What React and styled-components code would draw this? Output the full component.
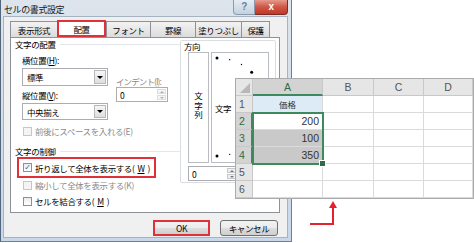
import React from "react";
import styled, { createGlobalStyle } from "styled-components";

const JP = `"Noto Sans CJK JP", "Noto Sans", sans-serif`;
const RED = "#e0303a";

const GlobalStyle = createGlobalStyle`
  html, body {
    margin: 0;
    padding: 0;
    background: #fff;
  }
  body {
    width: 474px;
    height: 243px;
    overflow: hidden;
    font-family: ${JP};
  }
`;

const tabs = [
  { label: "表示形式", width: 48 },
  { label: "配置", width: 49, marked: true },
  { label: "フォント", width: 45 },
  { label: "罫線", width: 46 },
  { label: "塗りつぶし", width: 47 },
  { label: "保護", width: 29 },
];

const cols = ["A", "B", "C", "D"];
const rows = [
  [{ v: "価格", tone: "blue", align: "center", jp: true }],
  [{ v: "200", tone: "white", align: "right" }],
  [{ v: "100", tone: "gray", align: "right" }],
  [{ v: "350", tone: "gray", align: "right" }],
  [],
  [],
];

const App = () => {
  return (
    <Page>
      <GlobalStyle />
      <Dialog>
        <TitleBar>
          <Title>セルの書式設定</Title>
          <WinButtons>
            <HelpButton>?</HelpButton>
            <CloseButton>x</CloseButton>
          </WinButtons>
        </TitleBar>
        <Body>
          <TabRow>
            {tabs.map((t) => (
              <Tab key={t.label} $w={t.width} $marked={t.marked}>
                {t.label}
              </Tab>
            ))}
          </TabRow>
          <Panel>
            <LeftCol>
              <GroupTitle>文字の配置</GroupTitle>
              <FieldRow>
                <FieldCol>
                  <Label>
                    横位置(<u>H</u>):
                  </Label>
                  <Select $h={18}>
                    <span>標準</span>
                    <DropButton />
                  </Select>
                  <Label $mt={3}>
                    縦位置(<u>V</u>):
                  </Label>
                  <Select $h={17}>
                    <span>中央揃え</span>
                    <DropButton />
                  </Select>
                </FieldCol>
                <IndentCol>
                  <Label $muted $tight>インデント(I):</Label>
                  <Spin $w={52}>
                    <span>0</span>
                    <SpinButtons $muted>
                      <SpinUp />
                      <SpinDown />
                    </SpinButtons>
                  </Spin>
                </IndentCol>
              </FieldRow>
              <CheckRow $mt={5} $muted>
                <CheckBox $muted />
                前後にスペースを入れる(E)
              </CheckRow>
              <GroupTitle $mt={8}>文字の制御</GroupTitle>
              <CheckRow $marked>
                <CheckBox $checked>✓</CheckBox>
                折り返して全体を表示する(<u>W</u>)
              </CheckRow>
              <CheckRow $mt={1} $muted>
                <CheckBox $muted />
                縮小して全体を表示する(K)
              </CheckRow>
              <CheckRow $mt={4}>
                <CheckBox />
                セルを結合する(<u>M</u>)
              </CheckRow>
            </LeftCol>
            <OrientGroup>
              <GroupLabel>方向</GroupLabel>
              <OrientRow>
                <VerticalBox>
                  <VerticalText>文字列</VerticalText>
                </VerticalBox>
                <Dial>
                  <DialDots width="58" height="111" viewBox="0 0 58 111">
                    {Array.from({ length: 13 }).map((_, i) => {
                      const a = ((90 - i * 15) * Math.PI) / 180;
                      const big = i % 3 === 0;
                      return (
                        <circle
                          key={i}
                          cx={6 + 49 * Math.cos(a)}
                          cy={55 - 49 * Math.sin(a)}
                          r={big ? 1.5 : 0.7}
                          fill="#000"
                        />
                      );
                    })}
                  </DialDots>
                  <DialText>文字</DialText>
                </Dial>
              </OrientRow>
              <Spin $w={50} $mt={3} $ml={4}>
                <span>0</span>
                <SpinButtons>
                  <SpinUp />
                  <SpinDown />
                </SpinButtons>
              </Spin>
            </OrientGroup>
          </Panel>
          <Footer>
            <Button $marked>OK</Button>
            <Button>キャンセル</Button>
          </Footer>
        </Body>
      </Dialog>

      <Sheet>
        <Corner />
        {cols.map((c) => (
          <ColHead key={c} $active={c === "A"}>
            {c}
          </ColHead>
        ))}
        {rows.map((r, ri) => (
          <React.Fragment key={ri}>
            <RowHead $active={ri >= 1 && ri <= 3}>{ri + 1}</RowHead>
            {cols.map((c, ci) => {
              const cell = r[ci];
              return (
                <Cell
                  key={c}
                  $tone={cell?.tone}
                  $align={cell?.align}
                  $jp={cell?.jp}
                >
                  {cell?.v}
                </Cell>
              );
            })}
          </React.Fragment>
        ))}
        <Selection>
          <FillHandle />
        </Selection>
      </Sheet>

      <Arrow width="34" height="30" viewBox="0 0 34 30">
        <polyline
          points="4,26 27,26 27,8"
          fill="none"
          stroke="#e4222e"
          strokeWidth="2"
        />
        <polygon points="27,3 23,10 31,10" fill="#e4222e" />
      </Arrow>
    </Page>
  );
};

const Page = styled.div`
  position: relative;
  width: 474px;
  height: 243px;
  overflow: hidden;
  background: #fff;
`;

const Dialog = styled.div`
  width: 292px;
  height: 242px;
  box-sizing: border-box;
  display: flex;
  flex-direction: column;
  background: linear-gradient(180deg, #dde4ec 0%, #c8d8ea 100%);
  border: 1px solid #6d8096;
  border-top: none;
  border-left-color: #53667b;
  font-family: ${JP};
  font-size: 8.5px;
  letter-spacing: -0.4px;
  color: #000;
`;

const TitleBar = styled.div`
  height: 16px;
  display: flex;
  justify-content: space-between;
  align-items: flex-start;
`;

const Title = styled.div`
  line-height: 19px;
  padding-left: 3px;
  font-size: 9px;
  color: #1a1a1a;
`;

const WinButtons = styled.div`
  display: flex;
  margin-right: 3px;
`;

const HelpButton = styled.div`
  width: 22px;
  height: 15px;
  box-sizing: border-box;
  border: 1px solid #8c9bab;
  border-top: none;
  border-radius: 0 0 0 4px;
  background: linear-gradient(180deg, #e6edf4, #c3d1df);
  color: #6b7f95;
  font-family: "Liberation Sans", sans-serif;
  font-size: 10px;
  font-weight: bold;
  text-align: center;
  line-height: 14px;
`;

const CloseButton = styled.div`
  width: 33px;
  height: 15px;
  box-sizing: border-box;
  border: 1px solid #7d2a22;
  border-top: none;
  border-left: none;
  border-radius: 0 0 4px 0;
  background: linear-gradient(180deg, #e59a8c 0%, #cf5645 50%, #c0392b 100%);
  color: #fff;
  font-family: "Liberation Sans", sans-serif;
  font-size: 10px;
  font-weight: bold;
  text-align: center;
  line-height: 13px;
`;

const Body = styled.div`
  flex: 1;
  margin: 0 3px 3px 2px;
  padding: 3px 7px 1px 6px;
  border: 1px solid #a6b3c2;
  background: #f0f0f0;
  display: flex;
  flex-direction: column;
`;

const TabRow = styled.div`
  height: 17px;
  display: flex;
  align-items: flex-end;
`;

const Tab = styled.div`
  width: ${(p) => p.$w}px;
  height: ${(p) => (p.$marked ? 17 : 16)}px;
  box-sizing: border-box;
  display: flex;
  align-items: center;
  justify-content: center;
  border: ${(p) => (p.$marked ? `2px solid ${RED}` : "1px solid #8e9199")};
  border-bottom: ${(p) => (p.$marked ? `2px solid ${RED}` : "none")};
  margin-right: ${(p) => (p.$marked ? 0 : -1)}px;
  background: ${(p) =>
    p.$marked ? "#fff" : "linear-gradient(180deg, #f3f3f3, #dcdcdc)"};
  white-space: nowrap;
  &:last-child {
    margin-right: 0;
  }
`;

const Panel = styled.div`
  height: 176px;
  box-sizing: border-box;
  border: 1px solid #8d9198;
  background: #fff;
  display: flex;
`;

const LeftCol = styled.div`
  width: 169px;
  padding-left: 4px;
  box-sizing: border-box;
  display: flex;
  flex-direction: column;
`;

const GroupTitle = styled.div`
  height: 12px;
  line-height: 12px;
  margin-top: ${(p) => p.$mt || 0}px;
  display: flex;
  align-items: center;
  white-space: nowrap;
  &::after {
    content: "";
    flex: 1;
    height: 1px;
    margin-left: 4px;
    background: #e3e6ea;
  }
`;

const FieldRow = styled.div`
  display: flex;
  margin-top: 4px;
  padding-left: 7px;
`;

const FieldCol = styled.div`
  width: 86px;
  display: flex;
  flex-direction: column;
`;

const Label = styled.div`
  height: 12px;
  line-height: 12px;
  margin-top: ${(p) => p.$mt || 0}px;
  margin-bottom: 2px;
  white-space: nowrap;
  letter-spacing: ${(p) => (p.$tight ? "-0.9px" : "inherit")};
  color: ${(p) => (p.$muted ? "#8a8a8a" : "#000")};
  u {
    text-underline-offset: 1px;
  }
`;

const Select = styled.div`
  height: ${(p) => p.$h}px;
  box-sizing: border-box;
  border: 1px solid #abadb3;
  background: #fff;
  display: flex;
  align-items: center;
  padding-left: 4px;
  span {
    flex: 1;
  }
`;

const DropButton = styled.div`
  width: 12px;
  align-self: stretch;
  margin: 1px;
  box-sizing: border-box;
  border: 1px solid #b5b8bd;
  background: linear-gradient(180deg, #f6f6f6, #dedede);
  display: flex;
  align-items: center;
  justify-content: center;
  &::after {
    content: "";
    border-left: 3px solid transparent;
    border-right: 3px solid transparent;
    border-top: 3px solid #000;
  }
`;

const IndentCol = styled.div`
  margin-left: 8px;
  padding-top: 21px;
  width: 52px;
  display: flex;
  flex-direction: column;
  ${Label} {
    margin-bottom: 0;
  }
`;

const Spin = styled.div`
  width: ${(p) => p.$w}px;
  height: 15px;
  margin-top: ${(p) => p.$mt || 0}px;
  margin-left: ${(p) => p.$ml || 0}px;
  box-sizing: border-box;
  border: 1px solid #abadb3;
  background: #fff;
  display: flex;
  align-items: center;
  padding-left: 3px;
  span {
    flex: 1;
  }
`;

const SpinButtons = styled.div`
  width: 9px;
  align-self: stretch;
  margin: 1px;
  display: flex;
  flex-direction: column;
  gap: 1px;
  opacity: ${(p) => (p.$muted ? 0.6 : 1)};
`;

const SpinUp = styled.div`
  flex: 1;
  border: 1px solid #c5c8cc;
  background: #f0f0f0;
  display: flex;
  align-items: center;
  justify-content: center;
  &::after {
    content: "";
    border-left: 2px solid transparent;
    border-right: 2px solid transparent;
    border-bottom: 2px solid #7a7a7a;
  }
`;

const SpinDown = styled(SpinUp)`
  &::after {
    border-bottom: none;
    border-top: 2px solid #7a7a7a;
  }
`;

const CheckRow = styled.div`
  display: flex;
  align-items: center;
  gap: 3px;
  height: ${(p) => (p.$marked ? 21 : 12)}px;
  box-sizing: border-box;
  margin-top: ${(p) => p.$mt || 0}px;
  margin-left: ${(p) => (p.$marked ? 2 : 8)}px;
  padding: ${(p) => (p.$marked ? "0 4px" : "0")};
  border: ${(p) => (p.$marked ? `2px solid ${RED}` : "none")};
  align-self: flex-start;
  white-space: nowrap;
  color: ${(p) => (p.$muted ? "#8a8a8a" : "#000")};
  u {
    text-underline-offset: 1px;
  }
`;

const CheckBox = styled.span`
  width: 9px;
  height: 9px;
  box-sizing: border-box;
  border: 1px solid ${(p) => (p.$muted ? "#c7c7c7" : "#8f8f8f")};
  background: ${(p) =>
    p.$muted ? "#f4f4f4" : "linear-gradient(180deg, #ececec, #ffffff)"};
  display: flex;
  align-items: center;
  justify-content: center;
  font-size: 8px;
  line-height: 1;
  letter-spacing: 0;
  color: #4b5d7f;
  font-family: "DejaVu Sans", sans-serif;
`;

const OrientGroup = styled.div`
  width: 96px;
  height: 143px;
  margin-top: 2px;
  box-sizing: border-box;
  border: 1px solid #dadde2;
  border-radius: 2px;
  padding-left: 3px;
  display: flex;
  flex-direction: column;
`;

const GroupLabel = styled.div`
  height: 10px;
  line-height: 10px;
  white-space: nowrap;
`;

const OrientRow = styled.div`
  display: flex;
  gap: 2px;
  margin-top: 1px;
  margin-left: 4px;
`;

const VerticalBox = styled.div`
  width: 21px;
  height: 111px;
  box-sizing: border-box;
  border: 1px solid #b9bcc1;
  display: flex;
  align-items: center;
  justify-content: center;
`;

const VerticalText = styled.div`
  writing-mode: vertical-rl;
  text-orientation: upright;
  letter-spacing: 1px;
  margin-top: -3px;
`;

const Dial = styled.div`
  width: 58px;
  height: 111px;
  box-sizing: border-box;
  border: 1px solid #b9bcc1;
  position: relative;
  display: flex;
  align-items: center;
  padding-left: 3px;
`;

const DialDots = styled.svg`
  position: absolute;
  left: -1px;
  top: -1px;
`;

const DialText = styled.span`
  position: relative;
  white-space: nowrap;
`;

const Footer = styled.div`
  display: flex;
  justify-content: flex-end;
  gap: 10px;
  margin-top: 7px;
  padding-right: 2px;
`;

const Button = styled.div`
  width: ${(p) => (p.$marked ? 57 : 58)}px;
  height: 16px;
  box-sizing: border-box;
  border: ${(p) => (p.$marked ? `2px solid ${RED}` : "1px solid #707070")};
  border-radius: ${(p) => (p.$marked ? 0 : 3)}px;
  background: linear-gradient(180deg, #f2f2f2 0%, #ebebeb 50%, #dddddd 51%, #cfcfcf 100%);
  display: flex;
  align-items: center;
  justify-content: center;
  white-space: nowrap;
`;

const Sheet = styled.div`
  position: absolute;
  left: 235px;
  top: 78px;
  display: grid;
  grid-template-columns: 17px 70px 51px 50px 49px;
  grid-template-rows: repeat(7, 17px);
  border: 1px solid #ababab;
  background: #fff;
  font-family: "Liberation Sans", Arial, sans-serif;
  font-size: 10.5px;
  color: #444;
`;

const HeadBase = styled.div`
  box-sizing: border-box;
  border-right: 1px solid #c8c8c8;
  border-bottom: 1px solid #c8c8c8;
  display: flex;
  align-items: center;
  color: #555;
`;

const Corner = styled(HeadBase)`
  background: #e6e6e6;
  position: relative;
  &::after {
    content: "";
    position: absolute;
    right: 2px;
    bottom: 2px;
    border-left: 10px solid transparent;
    border-bottom: 10px solid #b8b8b8;
  }
`;

const ColHead = styled(HeadBase)`
  justify-content: center;
  background: ${(p) => (p.$active ? "#d3d3d3" : "#e6e6e6")};
  border-bottom: ${(p) => (p.$active ? "2px solid #3d8a5f" : "1px solid #c8c8c8")};
  color: ${(p) => (p.$active ? "#2f6b47" : "#555")};
`;

const RowHead = styled(HeadBase)`
  padding-left: 3px;
  background: ${(p) => (p.$active ? "#d3d3d3" : "#e6e6e6")};
  border-right: ${(p) => (p.$active ? "2px solid #3d8a5f" : "1px solid #c8c8c8")};
  color: ${(p) => (p.$active ? "#2f6b47" : "#555")};
`;

const toneBg = { blue: "#ddebf7", gray: "#c9c9c9", white: "#fff" };

const Cell = styled.div`
  box-sizing: border-box;
  border-right: 1px solid #dadada;
  border-bottom: 1px solid #dadada;
  background: ${(p) => toneBg[p.$tone] || "#fff"};
  display: flex;
  align-items: center;
  justify-content: ${(p) =>
    p.$align === "right" ? "flex-end" : p.$align === "center" ? "center" : "flex-start"};
  padding: 0 3px;
  font-family: ${(p) => (p.$jp ? JP : "inherit")};
  font-size: ${(p) => (p.$jp ? "8.5px" : "inherit")};
  color: #333;
`;

const Selection = styled.div`
  position: absolute;
  left: 16px;
  top: 33px;
  width: 72px;
  height: 53px;
  box-sizing: border-box;
  border: 2px solid #3d8a5f;
  pointer-events: none;
`;

const FillHandle = styled.div`
  position: absolute;
  right: -4px;
  bottom: -4px;
  width: 5px;
  height: 5px;
  background: #2f6b47;
  border: 1px solid #fff;
`;

const Arrow = styled.svg`
  position: absolute;
  left: 306px;
  top: 198px;
`;

export default App;
